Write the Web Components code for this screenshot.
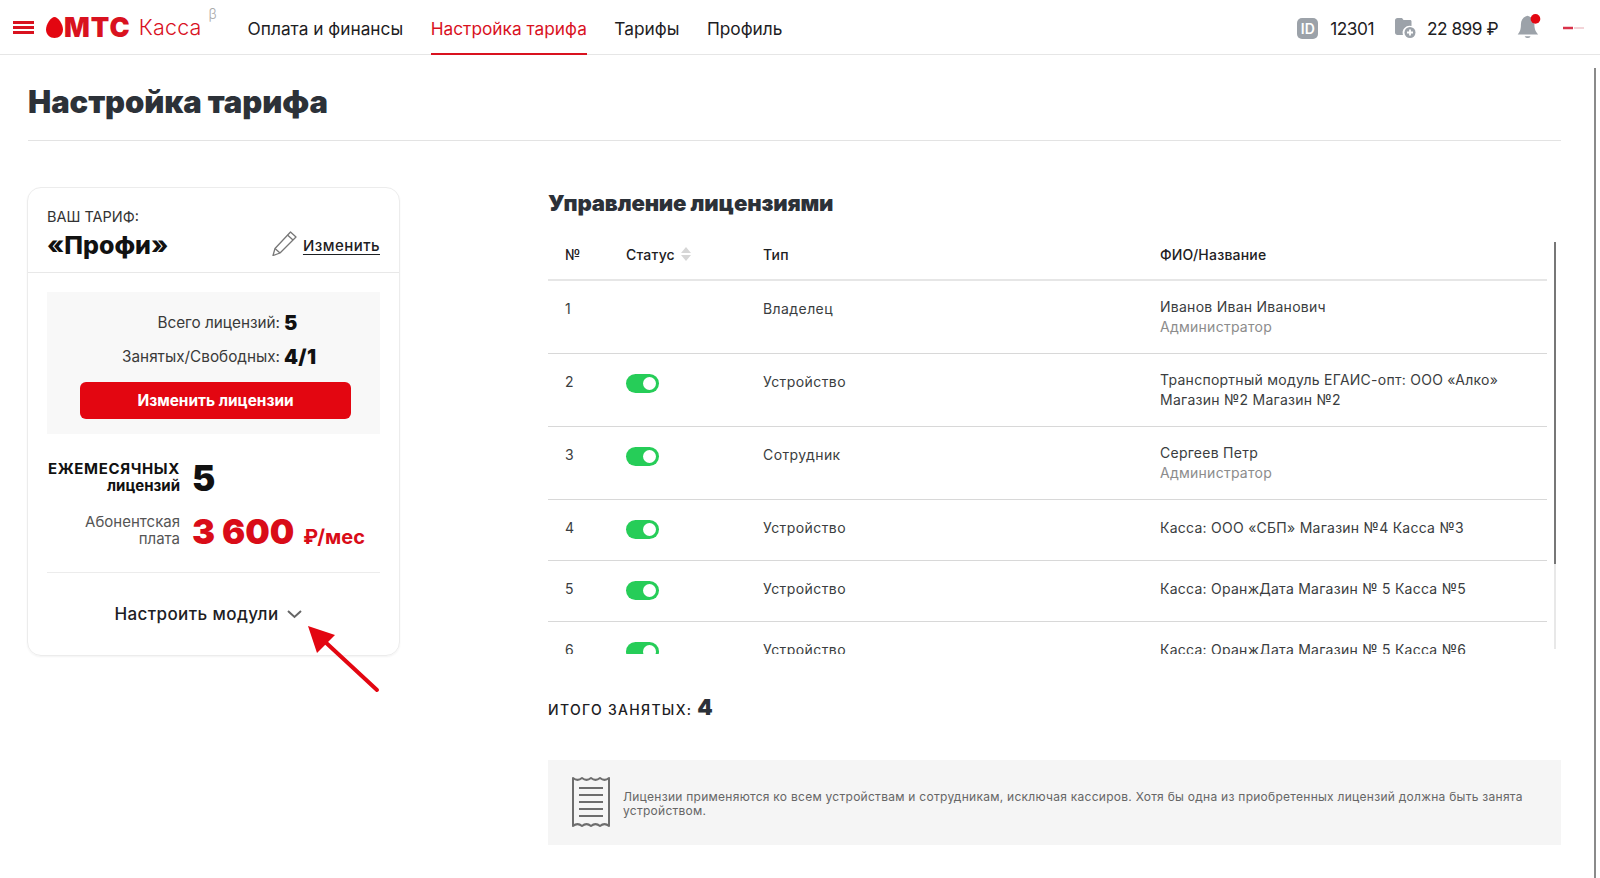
<!DOCTYPE html>
<html lang="ru">
<head>
<meta charset="utf-8">
<title>МТС Касса</title>
<style>
  html, body { margin: 0; background: #fff; }
  body { font-family: Inter, "Liberation Sans", sans-serif; color: #1d2023; height: 878px; overflow: hidden; }
</style>
</head>
<body>
<mts-header></mts-header>
<tariff-page>
  <tariff-card slot="side"></tariff-card>
  <license-panel slot="main">
    <license-row n="1" type="Владелец" name="Иванов Иван Иванович" sub="Администратор"></license-row>
    <license-row n="2" on type="Устройство" name="Транспортный модуль ЕГАИС-опт: ООО «Алко»" line="Магазин №2 Магазин №2"></license-row>
    <license-row n="3" on type="Сотрудник" name="Сергеев Петр" sub="Администратор"></license-row>
    <license-row n="4" on single type="Устройство" name="Касса: ООО «СБП» Магазин №4 Касса №3"></license-row>
    <license-row n="5" on single type="Устройство" name="Касса: ОранжДата Магазин № 5 Касса №5"></license-row>
    <license-row n="6" on single type="Устройство" name="Касса: ОранжДата Магазин № 5 Касса №6"></license-row>
  </license-panel>
</tariff-page>

<script>
class MtsHeader extends HTMLElement {
  constructor() {
    super();
    this.attachShadow({ mode: 'open' }).innerHTML = `
      <style>
        :host { display: flex; align-items: center; height: 55px; box-sizing: border-box; border-bottom: 1px solid #e6e6e6; padding: 2px 15px 0 13px; font-size: 17.300px; color: #1d2023; }
        .burger { width: 21px; display: grid; gap: 2px; margin: -2px 12px 0 0; }
        .burger i { height: 3px; background: #d9121f; }
        .brand { display: flex; align-items: center; color: #d9121f; margin: -2px 31px 0 0; }
        .mts { font-weight: 900; font-size: 27px; letter-spacing: 1px; margin-left: 1px; line-height: 1; }
        .kassa { font-size: 21.500px; margin-left: 8px; font-weight: 300; letter-spacing: .2px; }
        .beta { font-size: 14px; color: #aaa; margin: -27px 0 0 7px; font-weight: 300; width: 8px; }
        nav { display: flex; gap: 27.500px; align-self: stretch; margin-top: -2px; }
        nav a { display: flex; align-items: center; border-bottom: 2px solid transparent; margin-bottom: -1px; padding-top: 3px; }
        nav a.on { color: #d9121f; border-color: #d9121f; }
        .right { margin-left: auto; display: flex; align-items: center; }
        .id { width: 21px; height: 21px; border-radius: 5px; background: #9ca2a9; color: #fff; font-size: 14px; font-weight: 600; text-align: center; line-height: 21px; }
        .num { letter-spacing: -.5px; }
      </style>
      <div class="burger"><i></i><i></i><i></i></div>
      <div class="brand">
        <svg width="17" height="21" viewBox="0 0 17 21"><path d="M8.500 0C12 0 17 7 17 12.500 17 17.500 13 21 8.500 21S0 17.500 0 12.500C0 7 5 0 8.500 0Z" fill="#e30611"/></svg>
        <span class="mts">МТС</span><span class="kassa">Касса</span><span class="beta">β</span>
      </div>
      <nav><a>Оплата и финансы</a><a class="on">Настройка тарифа</a><a>Тарифы</a><a>Профиль</a></nav>
      <div class="right">
        <div class="id">ID</div>
        <span class="num" style="margin:0 20px 0 12px">12301</span>
        <svg width="22" height="22" viewBox="0 0 22 22"><path d="M1 3.500C1 2 2 1 3.500 1H8l1.500 2H16c1 0 1.500.7 1.500 1.500V9a7 7 0 0 0-8.500 9H3.500C2 18 1 17 1 15.500Z" fill="#9ca2a9"/><circle cx="16" cy="15.500" r="5.500" fill="#9ca2a9"/><path d="M16 12.500v6M13 15.500h6" stroke="#fff" stroke-width="1.800"/></svg>
        <span class="num" style="margin:0 17px 0 11px">22 899 ₽</span>
        <svg width="28" height="28" viewBox="0 0 26 26" style="margin-top:-3px"><path d="M11.500 2.500c-4 1-6 4-6 8 0 5-1 7-3 9.500h19c-2-2.500-3.500-4.500-3.500-9.500 0-4-2.500-7-6.500-8Z" fill="#9ca2a9"/><path d="M9 21.500a3 3 0 0 0 5.500 0Z" fill="#9ca2a9"/><circle cx="19" cy="5.500" r="4.500" fill="#e30611"/></svg>
        <svg width="22" height="4" viewBox="0 0 22 4" style="margin-left:20px"><path d="M0 2h10" stroke="#d9324a" stroke-width="2.500"/><path d="M11 2h10" stroke="#efc6cb" stroke-width="1.500"/></svg>
      </div>`;
  }
}

class TariffPage extends HTMLElement {
  constructor() {
    super();
    this.attachShadow({ mode: 'open' }).innerHTML = `
      <style>
        :host { display: block; padding: 0 39px 0 28px; position: relative; }
        h1 { margin: 0; font-size: 31px; line-height: 38px; padding: 28px 0 19px; font-weight: 900; color: #2c3138; letter-spacing: -.1px; }
        .rule { height: 1px; background: #e3e3e3; margin-bottom: 46px; }
        .cols { display: grid; grid-template-columns: 371px 1fr; column-gap: 149px; align-items: start; }
        .bar { position: absolute; top: 13px; right: 4px; width: 2px; height: 830px; background: #8a8a8a; }
      </style>
      <h1>Настройка тарифа</h1>
      <div class="rule"></div>
      <div class="cols"><slot name="side"></slot><slot name="main"></slot></div>
      <div class="bar"></div>`;
  }
}

class TariffCard extends HTMLElement {
  constructor() {
    super();
    this.attachShadow({ mode: 'open' }).innerHTML = `
      <style>
        :host { display: block; position: relative; height: 469px; margin: 0 -1px; box-sizing: border-box; border: 1px solid #ececec; border-radius: 14px; box-shadow: 0 1px 2px rgba(0,0,0,.05); color: #1d2023; }
        .head { height: 85px; box-sizing: border-box; border-bottom: 1px solid #e8e8e8; padding: 20px 19px 0 19px; }
        .label { font-size: 14.500px; line-height: 18px; color: #333; }
        .head-row { display: flex; align-items: center; justify-content: space-between; margin-top: 4px; }
        .plan { font-size: 25px; line-height: 30px; font-weight: 800; color: #111; }
        .edit { display: flex; align-items: center; gap: 6px; font-size: 15px; font-weight: 500; letter-spacing: .45px; text-decoration: underline; text-underline-offset: 3px; }
        .edit svg { margin-top: -3px; }
        .box { margin: 19px 19px 0; height: 142px; box-sizing: border-box; background: #f8f8f8; padding-top: 20px; font-size: 15.300px; color: #3a3a3a; }
        .box p { margin: 0 0 12px; display: grid; grid-template-columns: 233px 1fr; column-gap: 4px; align-items: center; line-height: 22px; height: 22px; text-align: right; }
        .box b { font-size: 20px; font-weight: 900; color: #111; letter-spacing: .3px; text-align: left; }
        .btn { height: 37px; line-height: 37px; margin: 14px 29px 0 33px; background: #e30611; border-radius: 6px; color: #fff; font-weight: 700; font-size: 15.400px; text-align: center; }
        .sum { display: grid; grid-template-columns: 133px auto; column-gap: 12px; padding-left: 19px; margin-top: 23px; }
        .cap { text-align: right; font-size: 15px; line-height: 17px; }
        .cap.strong { font-weight: 700; color: #111; margin-top: 3px; }
        .cap.strong span { letter-spacing: .65px; }
        .cap.soft { color: #555; margin-top: 15px; }
        .big { font-size: 35px; font-weight: 900; line-height: 40px; padding-top: 1px; color: #111; }
        .big.red { font-size: 34.500px; color: #d90c18; padding-top: 4px; margin-top: 10px; white-space: nowrap; }
        .big small { font-size: 20px; font-weight: 700; margin-left: 2px; }
        .line { height: 1px; background: #ececec; margin: 15px 19px 0; }
        .more { display: flex; align-items: center; justify-content: center; gap: 8px; margin: 30px 11px 0 0; font-size: 17px; font-weight: 500; letter-spacing: .4px; line-height: 22px; }
        .arrow { position: absolute; left: 278px; top: 437px; }
      </style>
      <div class="head">
        <div class="label">ВАШ ТАРИФ:</div>
        <div class="head-row">
          <div class="plan">«Профи»</div>
          <div class="edit">
            <svg width="25" height="25" viewBox="0 0 25 25" fill="none" stroke="#777" stroke-width="1.300" stroke-linejoin="round"><path d="M18.500 1 24 6 8 22 1 24.500l2-7Z"/><path d="M15.500 4l5.500 5M3 17.500l5 4.500"/></svg>
            <span>Изменить</span>
          </div>
        </div>
      </div>
      <div class="box">
        <p><span>Всего лицензий:</span><b>5</b></p>
        <p><span>Занятых/Свободных:</span><b>4/1</b></p>
        <div class="btn">Изменить лицензии</div>
      </div>
      <div class="sum">
        <div class="cap strong"><span>ЕЖЕМЕСЯЧНЫХ</span><br>лицензий</div>
        <div class="big">5</div>
        <div class="cap soft">Абонентская<br>плата</div>
        <div class="big red">3 600 <small>₽/мес</small></div>
      </div>
      <div class="line"></div>
      <div class="more">
        <span>Настроить модули</span>
        <svg width="15" height="9" viewBox="0 0 15 9" fill="none" stroke="#666" stroke-width="2"><path d="M1 1l6.500 6L14 1"/></svg>
      </div>
      <svg class="arrow" width="80" height="72" viewBox="0 0 80 72"><path d="M71 65 16 14" stroke="#e30611" stroke-width="4" stroke-linecap="round"/><path d="M2 1l27 9-18 18Z" fill="#e30611"/></svg>`;
  }
}

class LicensePanel extends HTMLElement {
  constructor() {
    super();
    this.attachShadow({ mode: 'open' }).innerHTML = `
      <style>
        :host { display: block; color: #1d2023; }
        h2 { margin: 0; font-size: 22.200px; line-height: 28px; font-weight: 900; color: #2c3138; letter-spacing: -.2px; padding-top: 2px; }
        .outer { position: relative; margin-top: 11px; }
        .wrap { height: 426px; margin-right: 14px; overflow: hidden; }
        .thead { display: grid; grid-template-columns: 61px 137px 397px 1fr; padding: 2px 0 0 17px; height: 49px; align-items: center; border-bottom: 2px solid #e6e6e6; font-size: 14px; font-weight: 500; letter-spacing: .2px; }
        .sort { display: inline-block; vertical-align: -2px; margin-left: 5px; }
        .sb { position: absolute; left: 1006px; top: 14px; width: 2px; height: 407px; background: linear-gradient(#777 0 79%, #e8e8e8 79%); }
        .total { margin-top: 40px; font-size: 14px; letter-spacing: 1.300px; font-weight: 500; line-height: 26px; height: 26px; }
        .total b { font-size: 22px; font-weight: 900; color: #2c3138; letter-spacing: 0; }
        .note { display: flex; align-items: center; gap: 12px; height: 85px; margin-top: 40px; background: #f5f5f5; padding: 0 30px 0 23px; font-size: 12px; line-height: 14.500px; letter-spacing: .27px; color: #666; }
        .note svg { flex: none; margin-top: -2px; }
        .note span { padding-top: 3px; }
      </style>
      <h2>Управление лицензиями</h2>
      <div class="outer">
        <div class="wrap">
          <div class="thead">
            <div>№</div>
            <div>Статус<svg class="sort" width="12" height="16" viewBox="0 0 12 16" fill="#d6d6d6"><path d="M6 1l5 6H1ZM6 15l5-6H1Z"/></svg></div>
            <div>Тип</div>
            <div>ФИО/Название</div>
          </div>
          <slot></slot>
        </div>
        <div class="sb"></div>
      </div>
      <div class="total">ИТОГО ЗАНЯТЫХ: <b>4</b></div>
      <div class="note">
        <svg width="40" height="54" viewBox="0 0 40 54" fill="none" stroke="#6d6d6d" stroke-width="2" stroke-linejoin="round"><path d="M2 3c3 2.500 6 2.500 9 0 3 2.500 6 2.500 9 0 3 2.500 6 2.500 9 0 3 2.500 6 2.500 9 0v48c-3-2.500-6-2.500-9 0-3-2.500-6-2.500-9 0-3-2.500-6-2.500-9 0-3-2.500-6-2.500-9 0Z"/><path d="M8 13h24M8 20h24M8 27h24M8 34h24M8 41h24"/></svg>
        <span>Лицензии применяются ко всем устройствам и сотрудникам, исключая кассиров. Хотя бы одна из приобретенных лицензий должна быть занята устройством.</span>
      </div>`;
  }
}

class LicenseRow extends HTMLElement {
  connectedCallback() {
    if (this.shadowRoot) return;
    const a = (k) => this.getAttribute(k) || '';
    const toggle = this.hasAttribute('on') ? '<span class="tg"></span>' : '';
    const extra = a('sub') ? `<div class="sub">${a('sub')}</div>` : a('line') ? `<div>${a('line')}</div>` : '';
    this.attachShadow({ mode: 'open' }).innerHTML = `
      <style>
        :host { display: grid; grid-template-columns: 61px 137px 397px 1fr; padding: 16px 0 16px 17px; border-bottom: 1px solid #d8d8d8; font-size: 14px; line-height: 20px; letter-spacing: .42px; color: #3a3d40; }
        :host([single]) { padding: 18px 0 22px 17px; }
        .c { padding-top: 2px; }
        :host([single]) .c { padding-top: 0; }
        .name { letter-spacing: .26px; }
        .sub { color: #8c8c8c; }
        .tg { display: block; position: relative; width: 33px; height: 19px; margin-top: 2px; border-radius: 10px; background: #26cd58; }
        :host([single]) .tg { margin: 2px 0 -4px; }
        .tg::after { content: ""; position: absolute; right: 3px; top: 3px; width: 13px; height: 13px; border-radius: 50%; background: #fff; }
      </style>
      <div class="c">${a('n')}</div>
      <div class="c">${toggle}</div>
      <div class="c">${a('type')}</div>
      <div class="name"><div>${a('name')}</div>${extra}</div>`;
  }
}

customElements.define('mts-header', MtsHeader);
customElements.define('tariff-page', TariffPage);
customElements.define('tariff-card', TariffCard);
customElements.define('license-panel', LicensePanel);
customElements.define('license-row', LicenseRow);
</script>
</body>
</html>
